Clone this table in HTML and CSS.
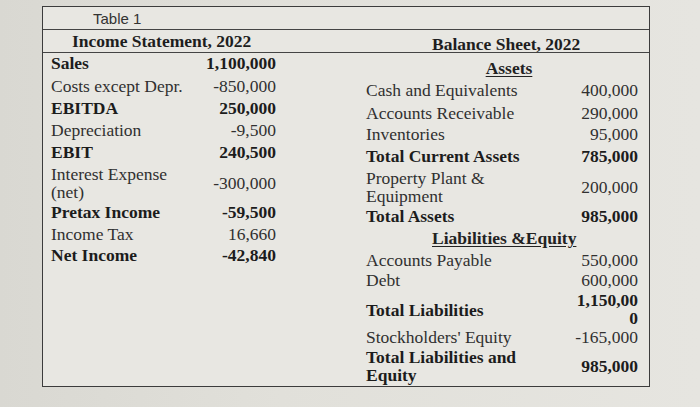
FILE: index.html
```html
<!DOCTYPE html>
<html>
<head>
<meta charset="utf-8">
<link rel="stylesheet" href="styles.css">
</head>
<body>
<div class="sheet">
  <div class="title">Table 1</div>
  <div class="heads">
    <div class="head head-left">Income Statement, 2022</div>
    <div class="head head-right">Balance Sheet, 2022</div>
  </div>
  <div class="body">
    <div class="col col-left">
      <div class="row h21 b"><span>Sales</span><span>1,100,000</span></div>
      <div class="row h24"><span>Costs except Depr.</span><span>-850,000</span></div>
      <div class="row h21 b"><span>EBITDA</span><span>250,000</span></div>
      <div class="row h22"><span>Depreciation</span><span>-9,500</span></div>
      <div class="row h23 b"><span>EBIT</span><span>240,500</span></div>
      <div class="row two"><span>Interest Expense<br>(net)</span><span>-300,000</span></div>
      <div class="row h21 b"><span>Pretax Income</span><span>-59,500</span></div>
      <div class="row h22"><span>Income Tax</span><span>16,660</span></div>
      <div class="row h20 b"><span>Net Income</span><span>-42,840</span></div>
    </div>
    <div class="col col-right">
      <div class="section">Assets</div>
      <div class="row h23"><span>Cash and Equivalents</span><span>400,000</span></div>
      <div class="row h22"><span>Accounts Receivable</span><span>290,000</span></div>
      <div class="row h21"><span>Inventories</span><span>95,000</span></div>
      <div class="row h23 b"><span>Total Current Assets</span><span>785,000</span></div>
      <div class="row two"><span>Property Plant &amp;<br>Equipment</span><span>200,000</span></div>
      <div class="row h21 b"><span>Total Assets</span><span>985,000</span></div>
      <div class="section sec2">Liabilities &amp;Equity</div>
      <div class="row h20"><span>Accounts Payable</span><span>550,000</span></div>
      <div class="row h20"><span>Debt</span><span>600,000</span></div>
      <div class="row two b tl"><span>Total Liabilities</span><span>1,150,00<br>0</span></div>
      <div class="row h19"><span>Stockholders' Equity</span><span>-165,000</span></div>
      <div class="row two b"><span>Total Liabilities and<br>Equity</span><span>985,000</span></div>
    </div>
  </div>
</div>
</body>
</html>
```
FILE: styles.css
```css
html, body {
  margin: 0;
  padding: 0;
}
body {
  width: 700px;
  height: 407px;
  overflow: hidden;
  background: linear-gradient(90deg, #d9d8d2 0%, #e1e0da 40%, #e6e5e0 100%);
  font-family: "Liberation Serif", "Times New Roman", serif;
  color: #303030;
}
.sheet {
  margin: 6px 0 0 42px;
  width: 608px;
  height: 381px;
  border: 1.5px solid #3c3c3c;
  background: #e8e7e2;
  box-sizing: border-box;
  display: flex;
  flex-direction: column;
}
.title {
  height: 23px;
  line-height: 23px;
  border-bottom: 1.5px solid #444;
  box-sizing: border-box;
  padding-left: 50px;
  font-family: "Liberation Sans", Arial, sans-serif;
  font-size: 15px;
  color: #333;
}
.heads {
  height: 23px;
  border-bottom: 1.5px solid #444;
  box-sizing: border-box;
  display: grid;
  grid-template-columns: 317px 1fr;
  font-weight: bold;
  font-size: 17.5px;
  color: #1e1e1e;
}
.head {
  line-height: 22px;
}
.head-left {
  padding-left: 29px;
}
.head-right {
  padding-left: 72px;
  padding-top: 3px;
}
.body {
  display: grid;
  grid-template-columns: 317px 1fr;
  font-size: 17.5px;
}
.col {
  display: flex;
  flex-direction: column;
}
.col-left {
  padding: 0 84px 0 8px;
}
.col-right {
  padding: 4px 11px 0 6px;
}
.row {
  display: flex;
  justify-content: space-between;
  align-items: center;
  line-height: 19px;
}
.row > span:last-child {
  text-align: right;
}
.h19 { height: 19px; }
.h20 { height: 20px; }
.h21 { height: 21px; }
.h22 { height: 22px; }
.h23 { height: 23px; }
.h24 { height: 24px; }
.two {
  line-height: 18.5px;
  padding: 0;
  height: 38px;
}
.tl > span:first-child {
  padding-top: 3px;
}
.b {
  font-weight: bold;
  color: #1c1c1c;
}
.section {
  height: 22px;
  line-height: 22px;
  text-align: center;
  font-weight: bold;
  text-decoration: underline;
  text-underline-offset: 2px;
  color: #222;
  padding-left: 14px;
}
.sec2 {
  height: 23px;
  text-align: left;
  padding-left: 66px;
}
```
